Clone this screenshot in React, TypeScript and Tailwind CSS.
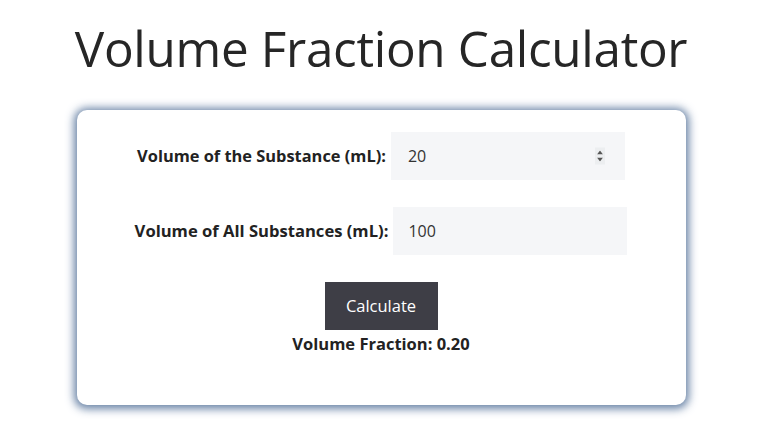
import React, { useState } from 'react'

export default function App() {
    const [substance, setSubstance] = useState('20')
    const [total, setTotal] = useState('100')
    const [result, setResult] = useState('0.20')

    const calculate = () => {
        const a = parseFloat(substance)
        const b = parseFloat(total)
        if (!isNaN(a) && !isNaN(b) && b !== 0) setResult((a / b).toFixed(2))
    }

    return (
        <div className="min-h-[441px] bg-white flex flex-col items-center pr-[6px] text-[#222] [font-family:'Open_Sans',sans-serif]">
            <h1 className="mt-[14px] text-[49.4px] leading-[68px] font-normal text-[#262626] tracking-[-0.3px]">
                Volume Fraction Calculator
            </h1>

            <div className="mt-[28px] w-[609px] rounded-[10px] bg-white shadow-[0_1px_9px_3px_rgba(80,110,150,0.85)] pt-[22px] pb-[48px] flex flex-col items-center">
                <div className="flex items-center gap-[5px]">
                    <label className="text-[16.4px] font-bold text-[#222]">Volume of the Substance (mL):</label>
                    <div className="relative w-[234px] h-[48px] bg-[#f5f6f8] flex items-center pl-[17px]">
                        <input
                            value={substance}
                            onChange={e => setSubstance(e.target.value)}
                            className="w-full bg-transparent outline-none text-[16px] text-[#333]"
                        />
                        <div className="absolute right-[20px] top-1/2 -translate-y-1/2 flex flex-col items-center gap-[3px] bg-[#eceef0] px-[2px] py-[3px]">
                            <svg width="6" height="4" viewBox="0 0 6 4"><path d="M0 4 L3 0 L6 4 Z" fill="#555" /></svg>
                            <svg width="6" height="4" viewBox="0 0 6 4"><path d="M0 0 L3 4 L6 0 Z" fill="#555" /></svg>
                        </div>
                    </div>
                </div>

                <div className="flex items-center gap-[5px] mt-[27px]">
                    <label className="text-[16.6px] font-bold text-[#222]">Volume of All Substances (mL):</label>
                    <div className="w-[234px] h-[48px] bg-[#f5f6f8] flex items-center pl-[15px]">
                        <input
                            value={total}
                            onChange={e => setTotal(e.target.value)}
                            className="w-full bg-transparent outline-none text-[16px] text-[#333]"
                        />
                    </div>
                </div>

                <button
                    onClick={calculate}
                    className="mt-[27px] w-[113px] h-[48px] bg-[#3e3e46] text-white text-[16.5px]"
                >
                    Calculate
                </button>
                <div className="mt-[2px] text-[16.5px] font-bold text-[#222]">Volume Fraction: {result}</div>
            </div>
        </div>
    )
}
